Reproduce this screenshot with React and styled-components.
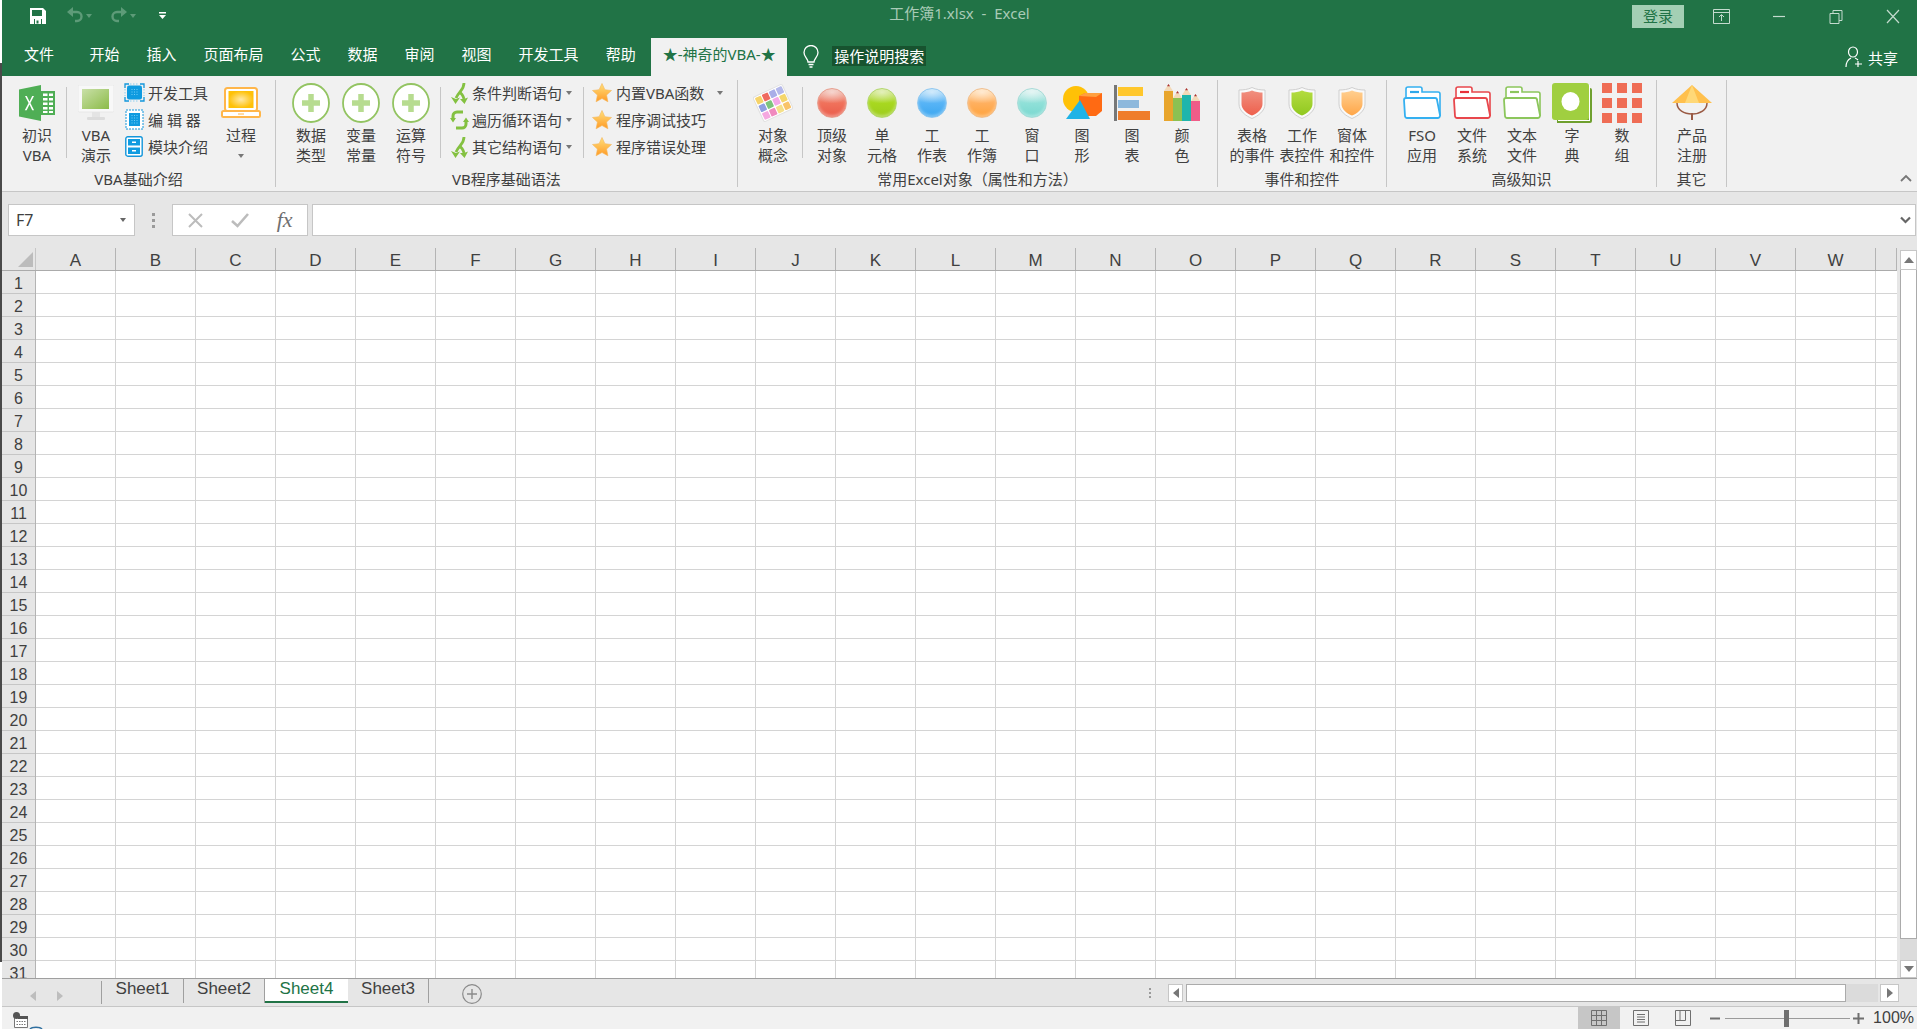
import React from 'react';
import styled, { createGlobalStyle } from 'styled-components';

const FONT = '"Noto Sans", "Noto Sans CJK SC", sans-serif';
const GREEN = '#217346';

const GlobalStyle = createGlobalStyle`
  html, body { margin: 0; padding: 0; background: #fff; overflow: hidden; }
  body { font-family: ${FONT}; font-size: 15px; color: #404040; }
  * { box-sizing: border-box; }
  svg { display: block; flex: none; }
`;

const Screen = styled.div`
  display: flex;
  width: 1917px;
  height: 1029px;
  overflow: hidden;
`;

const EdgeStrip = styled.div`
  width: 2px;
  flex: none;
  display: flex;
  flex-direction: column;
`;

const EdgeTop = styled.div`
  height: 63px;
  background: #fff;
`;

const EdgeDark = styled.div`
  height: 899px;
  background: #4a4a4a;
`;

const Window = styled.div`
  width: 1915px;
  height: 1029px;
  display: flex;
  flex-direction: column;
  background: #e6e6e6;
`;

/* title bar */
const TitleBar = styled.div`
  height: 38px;
  background: ${GREEN};
  display: grid;
  grid-template-columns: 1fr auto 1fr;
  align-items: start;
`;

const QuickAccess = styled.div`
  display: flex;
  align-items: center;
  height: 32px;
  padding-left: 28px;
`;

const QuickSlot = styled.div`
  margin-left: ${p => p.$gap || 0}px;
`;

const DocTitle = styled.div`
  color: #a9cbb7;
  font-size: 15px;
  line-height: 26px;
  white-space: pre;
`;

const WindowControls = styled.div`
  display: flex;
  align-items: center;
  justify-content: flex-end;
  height: 29px;
  padding-top: 3px;
  padding-right: 16px;
  gap: 41px;
`;

const SignIn = styled.div`
  width: 52px;
  height: 23px;
  margin-right: -12px;
  background: #a3cfb4;
  color: ${GREEN};
  font-size: 15px;
  line-height: 23px;
  text-align: center;
`;

const TabRow = styled.div`
  height: 38px;
  background: ${GREEN};
  display: flex;
  align-items: stretch;
  color: #fff;
`;

const FileTab = styled.div`
  width: 74px;
  line-height: 33px;
  text-align: center;
`;

const Tab = styled.div`
  padding: 0 13.5px;
  line-height: 33px;
`;

const ActiveTab = styled.div`
  width: 136px;
  margin-left: 2px;
  background: #f1f1f1;
  color: ${GREEN};
  line-height: 33px;
  text-align: center;
  white-space: nowrap;
`;

const TellMe = styled.div`
  display: flex;
  align-items: center;
  margin-left: 16px;
`;

const TellMeText = styled.span`
  margin-left: 13px;
  margin-top: -2px;
  padding: 0 2px;
  background: #17532f;
  line-height: 20px;
`;

const Share = styled.div`
  margin-left: auto;
  padding-right: 19px;
  display: flex;
  align-items: center;
  gap: 5px;
`;

/* ribbon */
const Ribbon = styled.div`
  height: 116px;
  padding-top: 4px;
  background: #f1f1f1;
  border-bottom: 1px solid #c6c6c6;
  display: flex;
  align-items: flex-start;
  flex: none;
`;

const Group = styled.div`
  width: ${p => p.$width}px;
  height: 107px;
  border-right: 1px solid #c6c6c6;
  display: flex;
  flex-direction: column;
  flex: none;
`;

const GroupBody = styled.div`
  display: flex;
  height: 85px;
  padding-left: ${p => p.$pad}px;
`;

const GroupLabel = styled.div`
  height: 22px;
  line-height: 28px;
  text-align: center;
  white-space: nowrap;
`;

const BigButton = styled.div`
  width: 50px;
  flex: none;
  display: flex;
  flex-direction: column;
  align-items: center;
`;

const BigIcon = styled.div`
  height: 45px;
  display: flex;
  align-items: center;
  justify-content: center;
`;

const BigLine = styled.div`
  height: 20px;
  line-height: 20px;
  white-space: nowrap;
  text-align: center;
`;

const Caret = styled.div`
  width: 0;
  height: 0;
  border-left: 3.5px solid transparent;
  border-right: 3.5px solid transparent;
  border-top: 4px solid ${p => p.$color || '#777'};
  flex: none;
  margin-top: ${p => p.$top || 0}px;
  margin-left: ${p => p.$left || 0}px;
`;

const InnerSep = styled.div`
  width: 1px;
  height: 71px;
  margin: 7px ${p => p.$right ?? 4}px 0 ${p => p.$left ?? 4}px;
  background: #c6c6c6;
  flex: none;
`;

const SmallCol = styled.div`
  margin-top: -1px;
  padding-left: ${p => p.$pad}px;
  width: ${p => (p.$width ? `${p.$width}px` : 'auto')};
  flex: none;
`;

const SmallItem = styled.div`
  height: 27px;
  display: flex;
  align-items: center;
  white-space: nowrap;
`;

const SmallIcon = styled.div`
  width: 20px;
  margin-right: ${p => p.$gap}px;
  display: flex;
  justify-content: center;
`;

const Ball = styled.div`
  width: 30px;
  height: 30px;
  border-radius: 50%;
  border: 1px solid ${p => p.$edge};
  background:
    radial-gradient(ellipse 70% 40% at 50% 12%, rgba(255, 255, 255, 0.55), rgba(255, 255, 255, 0) 100%),
    linear-gradient(180deg, ${p => p.$top} 0%, ${p => p.$mid} 50%, ${p => p.$low} 100%);
  box-shadow: inset 0 -2px 3px rgba(255, 255, 255, 0.35);
`;

const Collapse = styled.div`
  margin-left: auto;
  margin-top: 94px;
  margin-right: 5px;
`;

/* formula bar */
const FormulaRow = styled.div`
  height: 56px;
  padding: 12px 1px 12px 6px;
  display: flex;
  flex: none;
`;

const NameBox = styled.div`
  width: 127px;
  background: #fff;
  border: 1px solid #c6c6c6;
  display: flex;
  align-items: center;
  justify-content: space-between;
  padding: 0 8px 0 7px;
  font-size: 16px;
`;

const Dots = styled.div`
  width: 37px;
  display: flex;
  flex-direction: column;
  align-items: center;
  justify-content: center;
  gap: 3px;
`;

const Dot = styled.div`
  width: 3px;
  height: 3px;
  background: #9a9a9a;
`;

const FormulaButtons = styled.div`
  width: 136px;
  background: #fff;
  border: 1px solid #c6c6c6;
  display: flex;
  margin-right: 4px;
`;

const FormulaSlot = styled.div`
  width: 45px;
  display: flex;
  align-items: center;
  justify-content: center;
`;

const Fx = styled.span`
  font-family: "Liberation Serif", serif;
  font-style: italic;
  font-size: 22px;
  color: #6f6f6f;
`;

const FormulaInput = styled.div`
  flex: 1;
  background: #fff;
  border: 1px solid #c6c6c6;
  display: flex;
  align-items: center;
  justify-content: flex-end;
  padding-right: 4px;
`;

/* sheet */
const SheetArea = styled.div`
  height: 731px;
  display: flex;
  border-bottom: 1px solid #9f9f9f;
  flex: none;
`;

const Cells = styled.div`
  width: 1895px;
  display: flex;
  flex-direction: column;
  overflow: hidden;
`;

const HeaderRow = styled.div`
  height: 23px;
  display: flex;
  border-bottom: 1px solid #ababab;
  flex: none;
`;

const Corner = styled.div`
  width: 34px;
  border-right: 1px solid #c6c6c6;
  display: flex;
  align-items: flex-end;
  justify-content: flex-end;
  padding: 0 2px 3px 0;
  flex: none;
`;

const ColHead = styled.div`
  width: ${p => p.$width || 80}px;
  border-right: 1px solid #b4b4b4;
  font-family: "Liberation Sans", sans-serif;
  font-size: 17px;
  line-height: 25px;
  text-align: center;
  color: #404040;
  flex: none;
`;

const GridBody = styled.div`
  flex: 1;
  display: flex;
  overflow: hidden;
`;

const RowHeads = styled.div`
  width: 34px;
  flex: none;
  border-right: 1px solid #b4b4b4;
`;

const RowHead = styled.div`
  height: 23px;
  border-bottom: 1px solid #c6c6c6;
  font-family: "Liberation Sans", sans-serif;
  font-size: 16px;
  line-height: 26px;
  text-align: center;
  color: #404040;
`;

const CellGrid = styled.div`
  width: 1862px;
  flex: none;
  background-color: #fff;
  background-image:
    linear-gradient(to right, transparent 79px, #d4d4d4 79px),
    linear-gradient(to bottom, transparent 22px, #d4d4d4 22px);
  background-size: 80px 100%, 100% 23px;
  border-right: 1px solid #b4b4b4;
`;

const VScroll = styled.div`
  width: 17px;
  margin: 2px 0 0 3px;
  display: flex;
  flex-direction: column;
  background: #dbdbdb;
  flex: none;
`;

const ScrollButton = styled.div`
  width: ${p => p.$w || 17}px;
  height: ${p => p.$h || 18}px;
  background: #fff;
  border: 1px solid #c6c6c6;
  display: flex;
  align-items: center;
  justify-content: center;
  flex: none;
`;

const VThumb = styled.div`
  height: 669px;
  background: #fff;
  border: 1px solid #ababab;
  border-top: 0;
  margin-bottom: auto;
`;

const Tri = styled.div`
  width: 0;
  height: 0;
  ${p => p.$dir === 'up' && 'border-left: 5px solid transparent; border-right: 5px solid transparent; border-bottom: 6px solid #777;'}
  ${p => p.$dir === 'down' && 'border-left: 5px solid transparent; border-right: 5px solid transparent; border-top: 6px solid #777;'}
  ${p => p.$dir === 'left' && `border-top: 5px solid transparent; border-bottom: 5px solid transparent; border-right: 6px solid ${p.$color || '#777'};`}
  ${p => p.$dir === 'right' && `border-top: 5px solid transparent; border-bottom: 5px solid transparent; border-left: 6px solid ${p.$color || '#777'};`}
`;

/* sheet tabs */
const SheetBar = styled.div`
  height: 28px;
  display: flex;
  border-bottom: 1px solid #c6c6c6;
  flex: none;
`;

const TabNav = styled.div`
  width: 100px;
  height: 23px;
  margin-top: 2px;
  padding-left: 28px;
  display: flex;
  align-items: center;
  gap: 21px;
  border-right: 1px solid #9f9f9f;
  padding-top: 6px;
`;

const SheetTab = styled.div`
  width: ${p => p.$width}px;
  height: 24px;
  font-family: "Liberation Sans", sans-serif;
  font-size: 17px;
  line-height: 20px;
  text-align: center;
  color: ${p => (p.$active ? GREEN : '#404040')};
  background: ${p => (p.$active ? '#fff' : 'transparent')};
  border-bottom: ${p => (p.$active ? `2px solid ${GREEN}` : '0')};
  border-right: ${p => (p.$active ? '0' : '1px solid #9f9f9f')};
  flex: none;
`;

const AddSheet = styled.div`
  margin: 5px 0 0 33px;
`;

const HScrollDots = styled.div`
  margin-left: auto;
  width: 19px;
  padding-top: 9px;
  display: flex;
  flex-direction: column;
  gap: 2px;
`;

const SmallDot = styled.div`
  width: 2px;
  height: 2px;
  background: #9a9a9a;
`;

const HScroll = styled.div`
  width: 731px;
  height: 18px;
  margin: 5px 18px 0 0;
  display: flex;
  align-items: stretch;
`;

const HThumb = styled.div`
  width: 660px;
  margin-left: 3px;
  background: #fff;
  border: 1px solid #ababab;
`;

const HTrack = styled.div`
  width: 32px;
  background: #dbdbdb;
  margin-right: 2px;
`;

/* status bar */
const StatusBar = styled.div`
  height: 22px;
  background: #f1f1f1;
  display: flex;
  align-items: flex-start;
  padding: 5px 3px 0 10px;
  flex: 1;
`;

const StatusRight = styled.div`
  margin: -5px 0 0 auto;
  display: flex;
  align-items: center;
  height: 22px;
`;

const ViewButton = styled.div`
  width: 42px;
  height: 22px;
  background: ${p => (p.$active ? '#c6c6c6' : 'transparent')};
  display: flex;
  align-items: center;
  justify-content: center;
`;

const ZoomBar = styled.div`
  display: flex;
  align-items: center;
  margin-left: 5px;
`;

const ZoomTrack = styled.div`
  width: 125px;
  height: 1px;
  margin: 0 3px 0 5px;
  background: #9a9a9a;
  position: relative;
`;

const ZoomThumb = styled.div`
  position: absolute;
  left: 59px;
  top: -8px;
  width: 5px;
  height: 17px;
  background: #6f6f6f;
`;

const ZoomText = styled.div`
  margin-left: 9px;
  font-family: "Liberation Sans", sans-serif;
  font-size: 16px;
  color: #404040;
`;

/* drawn icons */
const SaveIcon = () => (
  <svg width="16" height="16" viewBox="0 0 16 16">
    <path fill="#fff" d="M0 0h13l3 3v13H0z" />
    <path fill={GREEN} d="M2 2h10v6H2zM4 11h8v5H4z" />
    <path fill="#fff" d="M5 11h6v5H5z" />
    <path fill={GREEN} d="M6.5 12.5h2v3h-2z" />
  </svg>
);

const UndoIcon = ({ flip }) => (
  <svg width="18" height="18" viewBox="0 0 18 18" style={flip ? { transform: 'scaleX(-1)' } : undefined}>
    <path fill="none" stroke="#5d9b78" strokeWidth="2.4" d="M3 5h8a4.5 4.5 0 0 1 0 9H9" />
    <path fill="#5d9b78" d="M7 0v10L1 5z" />
  </svg>
);

const Customize = () => (
  <svg width="7" height="8" viewBox="0 0 7 8">
    <path fill="#fff" d="M0 0h7v1.4H0zM0 3h7L3.5 7z" />
  </svg>
);

const RibbonDisplay = () => (
  <svg width="17" height="15" viewBox="0 0 17 15" fill="none" stroke="#c4dbce">
    <path d="M.5.5h16v14H.5zM.5 3.5h16" />
    <path d="M8.5 12V6M6 8l2.5-2.5L11 8" />
  </svg>
);

const Minimize = () => (
  <svg width="16" height="15" viewBox="0 0 16 15"><path stroke="#c4dbce" strokeWidth="1.2" d="M2 7.5h12" /></svg>
);

const Restore = () => (
  <svg width="16" height="15" viewBox="0 0 16 15" fill="none" stroke="#c4dbce">
    <path d="M2 4.5h9v10H2z" />
    <path d="M5 4V1.5h9v10h-3" />
  </svg>
);

const CloseX = () => (
  <svg width="16" height="15" viewBox="0 0 16 15"><path stroke="#c4dbce" strokeWidth="1.2" d="M2 1l12 13M14 1L2 14" /></svg>
);

const Bulb = () => (
  <svg width="16" height="24" viewBox="0 0 16 24" fill="none" stroke="#fff" strokeWidth="1.3">
    <path d="M5 17c0-3-4-5-4-9.500a7 7 0 0 1 14 0C15 12 11 14 11 17z" />
    <path d="M5.500 19.500h5M6.500 22h3" />
  </svg>
);

const ShareIcon = () => (
  <svg width="18" height="22" viewBox="0 0 18 22" fill="none" stroke="#fff" strokeWidth="1.2">
    <ellipse cx="8" cy="6" rx="4.500" ry="5" />
    <path d="M1 21c0-5 3-8 5-9M10 12c1 .4 2 1 3 2M13 15v6M10 18h7" />
  </svg>
);

const ExcelIcon = () => (
  <svg width="36" height="36" viewBox="0 0 36 36">
    <path fill="#4fae55" d="M0 4.500 22 0v36L0 31.500z" />
    <path fill="#fff" d="M6 11h1.800l2.700 5.500L13.200 11H15l-3.600 7 3.700 7.200h-1.900l-2.700-5.700-2.800 5.700H5.800L9.600 18z" />
    <path fill="#4fae55" d="M22 6h14v24H22z" />
    <path fill="#fff" d="M24 8.500h4.500v2.500H24zM30 8.500h4v2.500h-4zM24 13h4.500v2.500H24zM30 13h4v2.500h-4zM24 17.500h4.500V20H24zM30 17.500h4V20h-4zM24 22h4.500v2.500H24zM30 22h4v2.500h-4zM24 26h4.500v2H24zM30 26h4v2h-4z" />
  </svg>
);

const MonitorIcon = () => (
  <svg width="36" height="36" viewBox="0 0 36 36">
    <defs>
      <linearGradient id="mon" x1="0" y1="0" x2="1" y2="1">
        <stop offset="0" stopColor="#c9e0a8" />
        <stop offset="1" stopColor="#8cbb48" />
      </linearGradient>
    </defs>
    <rect width="36" height="27" rx="1.500" fill="#f8f8f8" stroke="#e8e8e8" />
    <rect x="4" y="4" width="27" height="20" fill="url(#mon)" />
    <path fill="#e4e4e4" d="M14 27h8v5h-8z" />
    <rect x="9" y="32" width="18" height="3" rx="1" fill="#dcdcdc" />
  </svg>
);

const BoardIcon = () => (
  <svg width="21" height="19" viewBox="0 0 21 19">
    <rect x="3" y="2.500" width="15" height="14" rx="2" fill="#0f9be0" />
    <path stroke="#72cdf5" strokeDasharray="1 1.500" d="M8 6v7M10.500 6v7M13 6v7" />
    <path fill="none" stroke="#1296db" strokeWidth="1.300" d="M1 5V1h4M16 1h4v4M20 14v4h-4M5 18H1v-4" />
    <path stroke="#8ccff0" strokeDasharray="1.500 1.500" d="M6 1h9M6 18h9M1 6v7M20 6v7" />
  </svg>
);

const EditorIcon = () => (
  <svg width="19" height="21" viewBox="0 0 19 21">
    <rect x="1" y="1" width="17" height="19" fill="#fff" stroke="#1296db" strokeDasharray="2 1" />
    <rect x="4" y="4" width="11" height="13" fill="#0f9be0" />
    <path stroke="#72cdf5" strokeDasharray="1 1.500" d="M7 6v9M9.500 6v9M12 6v9" />
  </svg>
);

const CabinetIcon = () => (
  <svg width="18" height="21" viewBox="0 0 18 21">
    <rect x=".8" y=".8" width="16.400" height="19.400" rx="2" fill="#fff" stroke="#1296db" strokeWidth="1.400" />
    <path fill="#0f9be0" d="M3 3h12v6.500H3zM3 11.500h12V18H3z" />
    <path fill="#fff" d="M7 5.500h4v1.500H7zM7 14h4v1.500H7z" />
  </svg>
);

const LaptopIcon = () => (
  <svg width="40" height="31" viewBox="0 0 40 31">
    <defs>
      <radialGradient id="sun">
        <stop offset="0" stopColor="#ffe9a8" />
        <stop offset="1" stopColor="#ffc107" />
      </radialGradient>
    </defs>
    <rect x="4" y="1" width="32" height="23" rx="2.500" fill="#fff" stroke="#ffb64a" strokeWidth="2" />
    <rect x="7.500" y="4" width="25" height="17" fill="url(#sun)" />
    <rect x="1" y="24" width="38" height="6" rx="1.500" fill="#fff" stroke="#ffb64a" strokeWidth="2" />
    <path stroke="#ffb64a" d="M17 27h6" />
  </svg>
);

const PlusCircle = () => (
  <svg width="38" height="40" viewBox="0 0 38 40">
    <ellipse cx="19" cy="20" rx="18" ry="19" fill="#fff" stroke="#93c462" strokeWidth="1.800" />
    <path stroke="#b7dc90" strokeWidth="5.500" d="M19 11v18M10 20h18" />
  </svg>
);

const BranchIcon = () => (
  <svg width="18" height="22" viewBox="0 0 18 22">
    <g fill="none" stroke="#84c141" strokeWidth="2.800">
      <path d="M14 1c0 7-5 8-8 15" />
      <path d="M9 10c2 1 4 3 5 7" />
    </g>
    <path fill="#84c141" d="M1 15l4.500 7L10 15.500 6 17zM10 17l4.500 5 3.500-6.500-4 1.500z" />
  </svg>
);

const LoopIcon = () => (
  <svg width="19" height="22" viewBox="0 0 19 22">
    <g fill="none" stroke="#84c141" strokeWidth="3">
      <path d="M3 11V7a4 4 0 0 1 4-4h6" />
      <path d="M16 11v4a4 4 0 0 1-4 4H6" />
    </g>
    <path fill="#84c141" d="M0 9h6l-3 4.500zM13 13h6l-3-4.500z" />
  </svg>
);

const StarIcon = ({ id }) => (
  <svg width="20" height="20" viewBox="0 0 20 20">
    <defs>
      <linearGradient id={id} x1="0" y1="0" x2="0" y2="1">
        <stop offset="0" stopColor="#ffe07a" />
        <stop offset="1" stopColor="#ff9a26" />
      </linearGradient>
    </defs>
    <path fill={`url(#${id})`} stroke="#f5b75a" strokeWidth=".6" d="M10 .5l2.900 6.200 6.600.8-4.900 4.600 1.300 6.700L10 15.500l-5.900 3.300 1.300-6.700L.5 7.500l6.600-.8z" />
  </svg>
);

const TilesIcon = () => {
  const tiles = ['#f6d36a', '#ef6a60', '#a9aee8', '#b4b8ea', '#8f9fe0', '#7cc47c', '#f4a8e8', '#f5d66a', '#f5a8e0', '#f08abe', '#f5e08a', '#f9c46a'];
  return (
    <svg width="40" height="38" viewBox="0 0 40 38">
      <g transform="rotate(-25 20 19)">
        <rect x="4" y="5.500" width="32" height="27" rx="2" fill="#fff" stroke="#e0e0e0" />
        {tiles.map((c, i) => (
          <rect key={i} x={5.500 + (i % 4) * 7.600} y={7 + Math.floor(i / 4) * 8.400} width="6.500" height="7.200" rx="1" fill={c} />
        ))}
      </g>
    </svg>
  );
};

const ShapesIcon = () => (
  <svg width="39" height="33" viewBox="0 0 39 33">
    <circle cx="13" cy="13" r="13" fill="#ffc107" />
    <path fill="#ff6a13" d="M16 10l6-3h17v18l-6 5H16z" />
    <path fill="#ffa040" d="M16 10l6-3h17l-6 4z" />
    <path fill="#1fb3e6" d="M17 14l10 19H3z" />
  </svg>
);

const ChartIcon = () => (
  <svg width="36" height="36" viewBox="0 0 36 36">
    <path fill="#777" d="M0 0h3v36H0z" />
    <path fill="#ffc72c" d="M4 2h25v9H4z" />
    <path fill="#8db8dc" d="M4 15h21v8H4z" />
    <path fill="#ef7d2b" d="M4 26h32v9H4z" />
  </svg>
);

const PencilsIcon = () => {
  const pencils = [
    { x: 0, top: 0, color: '#e8a52c' },
    { x: 9, top: 7, color: '#8cc152' },
    { x: 18, top: 4, color: '#1fb5ac' },
    { x: 27, top: 10, color: '#f05c88' },
  ];
  return (
    <svg width="36" height="37" viewBox="0 0 36 37">
      {pencils.map(p => (
        <g key={p.x}>
          <path fill="#f3d9b8" d={`M${p.x} ${p.top + 7}l4.500 -7 4.500 7z`} />
          <path fill="#a33" d={`M${p.x + 3} ${p.top + 2.300}l1.500 -2.300 1.500 2.300z`} />
          <rect x={p.x} y={p.top + 7} width="9" height={30 - p.top} fill={p.color} />
        </g>
      ))}
    </svg>
  );
};

const ShieldIcon = ({ id, top, low }) => (
  <svg width="28" height="32" viewBox="0 0 28 32">
    <defs>
      <linearGradient id={id} x1="0" y1="0" x2="0" y2="1">
        <stop offset="0" stopColor={top} />
        <stop offset="1" stopColor={low} />
      </linearGradient>
    </defs>
    <path fill="#f9f9f9" stroke="#cfcfcf" d="M14 .5c4 2 9 2.500 13 2.500v14c0 7-7 12-13 14.500C8 29 1 24 1 17V3c4 0 9-.5 13-2.500z" />
    <path fill={`url(#${id})`} d="M14 3.500c3.500 1.500 7 2 10.500 2v11.500c0 5.500-5.500 9.500-10.500 11.500-5-2-10.500-6-10.500-11.500V5.500c3.500 0 7-.5 10.500-2z" />
  </svg>
);

const FolderIcon = ({ color, tab }) => (
  <svg width="38" height="33" viewBox="0 0 38 33">
    <path fill="#fff" stroke={color} strokeWidth="1.600" d="M3 12V3a2 2 0 0 1 2-2h12a2 2 0 0 1 2 2v3h16a2 2 0 0 1 2 2v22" />
    <path stroke={tab} strokeWidth="2.200" d="M7 6h9" />
    <path fill="#fff" stroke={color} strokeWidth="1.800" d="M3 12h29a2 2 0 0 1 2 2l3 15a2.500 2.500 0 0 1-2.500 3H4a2 2 0 0 1-2-2L1 14a2 2 0 0 1 2-2z" />
  </svg>
);

const DictIcon = () => (
  <svg width="40" height="40" viewBox="0 0 40 40">
    <path fill="#6fa02f" d="M5 5h33a2 2 0 0 1 2 2v31a2 2 0 0 1-2 2H5z" />
    <path fill="#fff" d="M37 2h1v36H6v-1h31z" />
    <rect width="37" height="37" rx="3" fill="#a0cf40" />
    <ellipse cx="18.500" cy="18.500" rx="9" ry="9.500" fill="#fff" />
  </svg>
);

const ArrayIcon = () => (
  <svg width="40" height="40" viewBox="0 0 40 40" fill="#ef6d55">
    {[0, 15, 30].map(y => [0, 15, 30].map(x => <rect key={`${x}-${y}`} x={x} y={y} width="10" height="10" />))}
  </svg>
);

const HatIcon = () => (
  <svg width="40" height="35" viewBox="0 0 40 35">
    <path fill="none" stroke="#9a5a44" strokeWidth="1.500" d="M5 18c0 7 7 11 15 11s15-4 15-11" />
    <path stroke="#9a5a44" strokeWidth="2" d="M20 28v7" />
    <path fill="#ffc04d" d="M20 0L40 18H0z" />
    <path fill="#ffd877" d="M20 0l7 18H13z" />
  </svg>
);

const CollapseIcon = () => (
  <svg width="12" height="8" viewBox="0 0 12 8"><path fill="none" stroke="#777" strokeWidth="1.800" d="M1 7l5-5 5 5" /></svg>
);

const ChevronDown = () => (
  <svg width="11" height="8" viewBox="0 0 11 8"><path fill="none" stroke="#666" strokeWidth="2.200" d="M1 1.500l4.500 4.500L10 1.500" /></svg>
);

const CrossIcon = () => (
  <svg width="15" height="15" viewBox="0 0 15 15"><path stroke="#bcbcbc" strokeWidth="2" d="M1 1l13 13M14 1L1 14" /></svg>
);

const CheckIcon = () => (
  <svg width="18" height="15" viewBox="0 0 18 15"><path fill="none" stroke="#bcbcbc" strokeWidth="2.600" d="M1 8l5.500 5L17 1" /></svg>
);

const CornerTriangle = () => (
  <svg width="15" height="15" viewBox="0 0 15 15"><path fill="#bcbcbc" d="M15 0v15H0z" /></svg>
);

const AddCircle = () => (
  <svg width="20" height="20" viewBox="0 0 20 20" fill="none" stroke="#8a8a8a">
    <circle cx="10" cy="10" r="9.300" strokeWidth="1.200" />
    <path strokeWidth="1.400" d="M10 5v10M5 10h10" />
  </svg>
);

const MacroIcon = () => (
  <svg width="36" height="17" viewBox="0 0 36 17">
    <path fill="#fff" stroke="#777" d="M2.500 4.500h13v11h-13z" />
    <path fill="#555" d="M6 4h10v3H6z" />
    <circle cx="4.500" cy="3.500" r="3.500" fill="#555" />
    <path stroke="#777" strokeDasharray="1.500 1" d="M4.500 9.500h9M4.500 12.500h9" />
    <path fill="none" stroke="#2f6f9f" strokeWidth="1.500" d="M18 17c2-2.500 10-2.500 12 0" />
  </svg>
);

const NormalView = () => (
  <svg width="16" height="16" viewBox="0 0 16 16" fill="none" stroke="#6f6f6f">
    <path d="M.5.5h15v15H.5zM5.500.5v15M10.500.5v15M.5 5.500h15M.5 10.500h15" />
  </svg>
);

const PageView = () => (
  <svg width="16" height="16" viewBox="0 0 16 16" fill="none" stroke="#6f6f6f">
    <path d="M.5.5h15v15H.5zM4 4.500h8M4 7h8M4 9.500h8M4 12h8" />
  </svg>
);

const BreakView = () => (
  <svg width="16" height="16" viewBox="0 0 16 16" fill="none" stroke="#6f6f6f">
    <path d="M.5.500h15v15H.5zM.5 10.500h10M5 .5v10M10.500.5v10" />
  </svg>
);

const ZoomGlyph = ({ plus }) => (
  <svg width="11" height="11" viewBox="0 0 11 11">
    <path stroke="#6f6f6f" strokeWidth="2" d={plus ? 'M0 5.500h11M5.500 0v11' : 'M1 5.500h10'} />
  </svg>
);

const balls = [
  { lines: ['顶级', '对象'], top: '#eab0a2', mid: '#f0725c', low: '#ea5a48', edge: '#e8a090' },
  { lines: ['单', '元格'], top: '#c8e07a', mid: '#a8d820', low: '#9ccc1c', edge: '#b4d870' },
  { lines: ['工', '作表'], top: '#a8d8f8', mid: '#58b4f6', low: '#3aa6f0', edge: '#90c8f0' },
  { lines: ['工', '作簿'], top: '#ffd8a8', mid: '#ffb060', low: '#ffa23a', edge: '#f0c090' },
  { lines: ['窗', '口'], top: '#d0ecea', mid: '#90e0d8', low: '#78d8d0', edge: '#a8dcd8' },
];

const columns = 'ABCDEFGHIJKLMNOPQRSTUVW'.split('');
const rows = Array.from({ length: 31 }, (_, i) => i + 1);

function Big({ icon, lines, caret }) {
  return (
    <BigButton>
      <BigIcon>{icon}</BigIcon>
      {lines.map(line => <BigLine key={line}>{line}</BigLine>)}
      {caret ? <Caret $top={9} /> : null}
    </BigButton>
  );
}

function Small({ icon, label, gap, caret }) {
  return (
    <SmallItem>
      <SmallIcon $gap={gap}>{icon}</SmallIcon>
      {label}
      {caret ? <Caret $left={caret} /> : null}
    </SmallItem>
  );
}

export default function App() {
  return (
    <Screen>
      <GlobalStyle />
      <EdgeStrip>
        <EdgeTop />
        <EdgeDark />
      </EdgeStrip>
      <Window>
        <TitleBar>
          <QuickAccess>
            <SaveIcon />
            <QuickSlot $gap={20}><UndoIcon /></QuickSlot>
            <QuickSlot $gap={2}><Caret $color="#5d9b78" /></QuickSlot>
            <QuickSlot $gap={18}><UndoIcon flip /></QuickSlot>
            <QuickSlot $gap={2}><Caret $color="#5d9b78" /></QuickSlot>
            <QuickSlot $gap={23}><Customize /></QuickSlot>
          </QuickAccess>
          <DocTitle>{'工作簿1.xlsx  -  Excel'}</DocTitle>
          <WindowControls>
            <SignIn>登录</SignIn>
            <RibbonDisplay />
            <Minimize />
            <Restore />
            <CloseX />
          </WindowControls>
        </TitleBar>
        <TabRow>
          <FileTab>文件</FileTab>
          {['开始', '插入', '页面布局', '公式', '数据', '审阅', '视图', '开发工具', '帮助'].map(t => <Tab key={t}>{t}</Tab>)}
          <ActiveTab>★-神奇的VBA-★</ActiveTab>
          <TellMe>
            <Bulb />
            <TellMeText>操作说明搜索</TellMeText>
          </TellMe>
          <Share>
            <ShareIcon />
            共享
          </Share>
        </TabRow>

        <Ribbon>
          <Group $width={274}>
            <GroupBody $pad={10}>
              <Big icon={<ExcelIcon />} lines={['初识', 'VBA']} />
              <InnerSep />
              <Big icon={<MonitorIcon />} lines={['VBA', '演示']} />
              <SmallCol $pad={3} $width={95}>
                <Small icon={<BoardIcon />} label="开发工具" gap={4} />
                <Small icon={<EditorIcon />} label="编 辑 器" gap={4} />
                <Small icon={<CabinetIcon />} label="模块介绍" gap={4} />
              </SmallCol>
              <Big icon={<LaptopIcon />} lines={['过程']} caret />
            </GroupBody>
            <GroupLabel>VBA基础介绍</GroupLabel>
          </Group>

          <Group $width={462}>
            <GroupBody $pad={10}>
              <Big icon={<PlusCircle />} lines={['数据', '类型']} />
              <Big icon={<PlusCircle />} lines={['变量', '常量']} />
              <Big icon={<PlusCircle />} lines={['运算', '符号']} />
              <InnerSep $right={0} />
              <SmallCol $pad={8}>
                <Small icon={<BranchIcon />} label="条件判断语句" gap={3} caret={4} />
                <Small icon={<LoopIcon />} label="遍历循环语句" gap={3} caret={4} />
                <Small icon={<BranchIcon />} label="其它结构语句" gap={3} caret={4} />
              </SmallCol>
              <InnerSep $left={11} $right={0} />
              <SmallCol $pad={8}>
                <Small icon={<StarIcon id="star1" />} label="内置VBA函数" gap={4} caret={13} />
                <Small icon={<StarIcon id="star2" />} label="程序调试技巧" gap={4} />
                <Small icon={<StarIcon id="star3" />} label="程序错误处理" gap={4} />
              </SmallCol>
            </GroupBody>
            <GroupLabel>VB程序基础语法</GroupLabel>
          </Group>

          <Group $width={480}>
            <GroupBody $pad={10}>
              <Big icon={<TilesIcon />} lines={['对象', '概念']} />
              <InnerSep />
              {balls.map(b => (
                <Big key={b.lines.join()} lines={b.lines} icon={<Ball $top={b.top} $mid={b.mid} $low={b.low} $edge={b.edge} />} />
              ))}
              <Big icon={<ShapesIcon />} lines={['图', '形']} />
              <Big icon={<ChartIcon />} lines={['图', '表']} />
              <Big icon={<PencilsIcon />} lines={['颜', '色']} />
            </GroupBody>
            <GroupLabel>常用Excel对象（属性和方法）</GroupLabel>
          </Group>

          <Group $width={169}>
            <GroupBody $pad={9}>
              <Big icon={<ShieldIcon id="sh1" top="#f09080" low="#ee5f4c" />} lines={['表格', '的事件']} />
              <Big icon={<ShieldIcon id="sh2" top="#b4dc40" low="#90c820" />} lines={['工作', '表控件']} />
              <Big icon={<ShieldIcon id="sh3" top="#ffcf90" low="#ffa648" />} lines={['窗体', '和控件']} />
            </GroupBody>
            <GroupLabel>事件和控件</GroupLabel>
          </Group>

          <Group $width={270}>
            <GroupBody $pad={10}>
              <Big icon={<FolderIcon color="#35b0f0" tab="#2ea8ea" />} lines={['FSO', '应用']} />
              <Big icon={<FolderIcon color="#e8474c" tab="#e8303a" />} lines={['文件', '系统']} />
              <Big icon={<FolderIcon color="#8cc65c" tab="#8cc65c" />} lines={['文本', '文件']} />
              <Big icon={<DictIcon />} lines={['字', '典']} />
              <Big icon={<ArrayIcon />} lines={['数', '组']} />
            </GroupBody>
            <GroupLabel>高级知识</GroupLabel>
          </Group>

          <Group $width={70}>
            <GroupBody $pad={10}>
              <Big icon={<HatIcon />} lines={['产品', '注册']} />
            </GroupBody>
            <GroupLabel>其它</GroupLabel>
          </Group>

          <Collapse><CollapseIcon /></Collapse>
        </Ribbon>

        <FormulaRow>
          <NameBox>
            F7
            <Caret $color="#666" />
          </NameBox>
          <Dots><Dot /><Dot /><Dot /></Dots>
          <FormulaButtons>
            <FormulaSlot><CrossIcon /></FormulaSlot>
            <FormulaSlot><CheckIcon /></FormulaSlot>
            <FormulaSlot><Fx>fx</Fx></FormulaSlot>
          </FormulaButtons>
          <FormulaInput><ChevronDown /></FormulaInput>
        </FormulaRow>

        <SheetArea>
          <Cells>
            <HeaderRow>
              <Corner><CornerTriangle /></Corner>
              {columns.map(c => <ColHead key={c}>{c}</ColHead>)}
              <ColHead $width={21} />
            </HeaderRow>
            <GridBody>
              <RowHeads>
                {rows.map(r => <RowHead key={r}>{r}</RowHead>)}
              </RowHeads>
              <CellGrid />
            </GridBody>
          </Cells>
          <VScroll>
            <ScrollButton $h={20}><Tri $dir="up" /></ScrollButton>
            <VThumb />
            <ScrollButton><Tri $dir="down" /></ScrollButton>
          </VScroll>
        </SheetArea>

        <SheetBar>
          <TabNav>
            <Tri $dir="left" $color="#bdbdbd" />
            <Tri $dir="right" $color="#bdbdbd" />
          </TabNav>
          <SheetTab $width={82}>Sheet1</SheetTab>
          <SheetTab $width={81}>Sheet2</SheetTab>
          <SheetTab $width={83} $active>Sheet4</SheetTab>
          <SheetTab $width={81}>Sheet3</SheetTab>
          <AddSheet><AddCircle /></AddSheet>
          <HScrollDots><SmallDot /><SmallDot /><SmallDot /></HScrollDots>
          <HScroll>
            <ScrollButton $w={15}><Tri $dir="left" /></ScrollButton>
            <HThumb />
            <HTrack />
            <ScrollButton $w={19}><Tri $dir="right" /></ScrollButton>
          </HScroll>
        </SheetBar>

        <StatusBar>
          <MacroIcon />
          <StatusRight>
            <ViewButton $active><NormalView /></ViewButton>
            <ViewButton><PageView /></ViewButton>
            <ViewButton><BreakView /></ViewButton>
            <ZoomBar>
              <ZoomGlyph />
              <ZoomTrack><ZoomThumb /></ZoomTrack>
              <ZoomGlyph plus />
            </ZoomBar>
            <ZoomText>100%</ZoomText>
          </StatusRight>
        </StatusBar>
      </Window>
    </Screen>
  );
}
